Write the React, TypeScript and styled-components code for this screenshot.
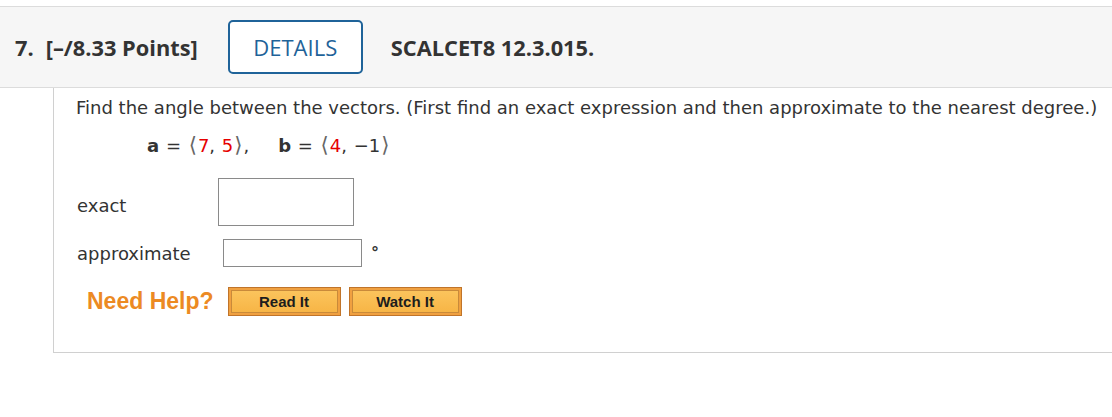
import React from "react";
import styled, { createGlobalStyle } from "styled-components";

const Global = createGlobalStyle`
  html, body { margin: 0; padding: 0; background: #fff; }
  body { font-family: "DejaVu Sans", Verdana, sans-serif; color: #333; }
`;

const Page = styled.div`
  padding-top: 6px;
  width: 1112px;
`;

const Header = styled.div`
  display: flex;
  align-items: center;
  height: 80px;
  background: #f6f6f6;
  border-top: 1px solid #dcdcdc;
  border-bottom: 1px solid #dcdcdc;
  padding-left: 15px;
  font-family: "Open Sans", sans-serif;
  color: #333;
`;

const QNum = styled.span`
  font-weight: 700;
  font-size: 21.8px;
  margin-right: 12px;
`;

const Points = styled.span`
  font-weight: 700;
  font-size: 21.8px;
`;

const DetailsBtn = styled.button`
  margin-left: 30px;
  width: 135px;
  height: 54px;
  border: 2px solid #1f6399;
  border-radius: 5px;
  background: #fff;
  color: #1f6399;
  font-family: "Open Sans", sans-serif;
  font-size: 22px;
  padding: 0;
`;

const Code = styled.span`
  margin-left: 28px;
  font-weight: 700;
  font-size: 21.8px;
`;

const Panel = styled.div`
  margin-left: 53px;
  border-left: 1px solid #d0d0d0;
  border-bottom: 1px solid #d0d0d0;
  height: 265px;
  padding: 9px 0 0 22px;
  box-sizing: border-box;
`;

const Prompt = styled.div`
  font-size: 18px;
  line-height: 22px;
  color: #333;
  white-space: nowrap;
`;

const Vectors = styled.div`
  margin-top: 15px;
  padding-left: 71px;
  font-size: 18px;
  line-height: 22px;
  display: flex;
  gap: 29px;
  word-spacing: 1px;
`;

const Vec = styled.span`
  white-space: pre;
`;

const Bold = styled.b`
  font-weight: bold;
  color: #333;
`;

const Red = styled.span`
  color: #e60000;
`;

const Angle = styled.span`
  font-family: "DejaVu Sans", sans-serif;
  font-size: 21px;
  color: #666;
  margin: 0 1px;
`;

const Row = styled.div<{ $mt: number }>`
  display: flex;
  align-items: center;
  margin-top: ${(p) => p.$mt}px;
  font-size: 18px;
`;

const Label = styled.span<{ $w: number; $dy?: number }>`
  display: inline-block;
  width: ${(p) => p.$w}px;
  padding-left: 1px;
  position: relative;
  top: ${(p) => p.$dy ?? 0}px;
`;

const Box = styled.div<{ $w: number; $h: number }>`
  width: ${(p) => p.$w}px;
  height: ${(p) => p.$h}px;
  border: 1px solid #8a8a8a;
  box-sizing: border-box;
  background: #fff;
`;

const Degree = styled.span`
  margin-left: 9px;
  margin-top: -2px;
  font-size: 16px;
  font-weight: bold;
  color: #333;
`;

const HelpRow = styled.div`
  display: flex;
  align-items: center;
  margin-top: 20px;
  padding-left: 11px;
  gap: 8px;
`;

const NeedHelp = styled.span`
  font-family: "Liberation Sans", Arial, sans-serif;
  font-weight: bold;
  font-size: 23px;
  color: #ec8a23;
  margin-right: 6px;
`;

const HelpBtn = styled.span`
  display: flex;
  width: 113px;
  height: 29px;
  box-sizing: border-box;
  background: #f0a040;
  border: 1px solid #c0742a;
  padding: 2px;
`;

const HelpInner = styled.span`
  flex: 1;
  display: flex;
  align-items: center;
  justify-content: center;
  background: linear-gradient(#fbc45c, #f7b546);
  border: 1px solid #c98a3a;
  font-family: "Liberation Sans", Arial, sans-serif;
  font-weight: bold;
  font-size: 15px;
  color: #1d1d1d;
`;

export default function App() {
  return (
    <>
      <Global />
      <Page>
        <Header>
          <QNum>7.</QNum>
          <Points>[–/8.33 Points]</Points>
          <DetailsBtn>DETAILS</DetailsBtn>
          <Code>SCALCET8 12.3.015.</Code>
        </Header>
        <Panel>
          <Prompt>
            Find the angle between the vectors. (First find an exact expression and then approximate to the nearest degree.)
          </Prompt>
          <Vectors>
            <Vec>
              <Bold>a</Bold> = <Angle>⟨</Angle><Red>7</Red>, <Red>5</Red><Angle>⟩</Angle>,
            </Vec>
            <Vec>
              <Bold>b</Bold> = <Angle>⟨</Angle><Red>4</Red>, −1<Angle>⟩</Angle>
            </Vec>
          </Vectors>
          <Row $mt={21}>
            <Label $w={141} $dy={3}>exact</Label>
            <Box $w={136} $h={48} />
          </Row>
          <Row $mt={13}>
            <Label $w={146}>approximate</Label>
            <Box $w={139} $h={28} />
            <Degree>°</Degree>
          </Row>
          <HelpRow>
            <NeedHelp>Need Help?</NeedHelp>
            <HelpBtn>
              <HelpInner>Read It</HelpInner>
            </HelpBtn>
            <HelpBtn>
              <HelpInner>Watch It</HelpInner>
            </HelpBtn>
          </HelpRow>
        </Panel>
      </Page>
    </>
  );
}
